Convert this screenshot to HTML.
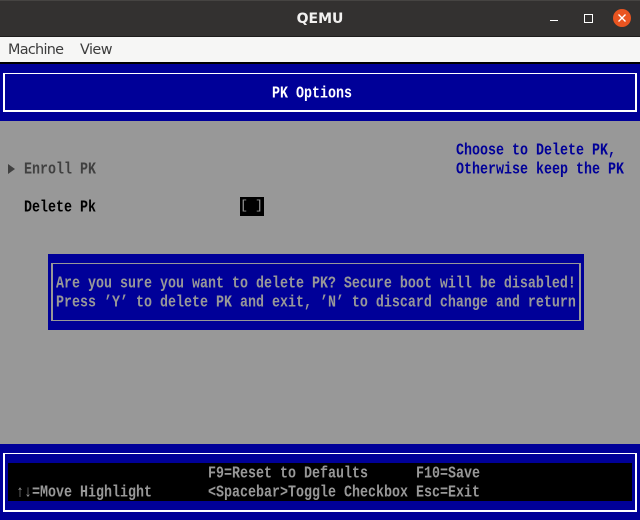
<!DOCTYPE html>
<html><head><meta charset="utf-8"><style>
html,body{margin:0;padding:0;width:640px;height:520px;overflow:hidden;background:#000}
div{position:absolute}
.t{position:absolute;font-family:"Liberation Mono","DejaVu Sans Mono",monospace;font-size:13.333px;line-height:19px;height:19px;white-space:pre;transform:scaleY(1.22);transform-origin:0 50%;font-weight:bold}
.w{color:#fff}.g{color:#989898}.b{color:#000098}.k{color:#000}.d{color:#404040}
</style></head><body>
<div style="left:0;top:0;width:640px;height:37px;background:#333130;border-bottom:1px solid #1e1d1c;box-sizing:border-box"></div>
<div style="left:0;top:0;width:640px;height:1px;background:#464442"></div>
<div style="left:0;top:0;width:640px;height:37px;text-align:center;color:#f2f1f0;font:bold 14px/39px 'DejaVu Sans','Liberation Sans',sans-serif">QEMU</div>
<div style="left:550px;top:20px;width:8px;height:1px;background:#fff"></div>
<div style="left:584px;top:14px;width:7px;height:7px;border:1px solid #fff"></div>
<div style="left:613px;top:9px;width:18px;height:18px;border-radius:50%;background:#e95420"></div>
<svg style="position:absolute;left:613px;top:9px" width="18" height="18"><path d="M5.5 5.5L12.5 12.5M12.5 5.5L5.5 12.5" stroke="#fff" stroke-width="1.4" fill="none"/></svg>
<div style="left:0;top:37px;width:640px;height:25px;background:#f6f6f5"></div>
<div style="left:8px;top:37px;height:25px;color:#3c3c3c;font:14.4px/26px 'DejaVu Sans','Liberation Sans',sans-serif;letter-spacing:-.7px;white-space:pre">Machine</div>
<div style="left:80px;top:37px;height:25px;color:#3c3c3c;font:14.4px/26px 'DejaVu Sans','Liberation Sans',sans-serif;letter-spacing:-.55px;white-space:pre">View</div>

<div style="left:0;top:62px;width:640px;height:2px;background:#000"></div>
<div style="left:0;top:64px;width:640px;height:57px;background:#000098"></div>
<div style="left:3px;top:73px;width:630px;height:36px;border:2px solid #fff;border-top-width:1px;border-bottom-width:2px"></div>
<div style="left:0;top:121px;width:640px;height:323px;background:#989898"></div>
<div style="left:0;top:444px;width:640px;height:76px;background:#000098"></div>
<div style="left:3px;top:453px;width:630px;height:56px;border:2px solid #fff;border-top-width:1px"></div>
<div style="left:8px;top:463px;width:624px;height:38px;background:#000"></div>
<div style="left:240px;top:197px;width:24px;height:19px;background:#000"></div>
<div style="left:48px;top:254px;width:536px;height:76px;background:#000098"></div>
<div style="left:51px;top:263px;width:526px;height:56px;border:2px solid #989898;border-top-width:1px;border-bottom-width:1px"></div>
<svg style="position:absolute;left:8px;top:164px" width="8" height="10"><path d="M0 0L7 5L0 10Z" fill="#404040"/></svg>

<span class="t w" style="left:272px;top:85px">PK Options</span>
<span class="t b" style="left:456px;top:142px">Choose to Delete PK,</span>
<span class="t b" style="left:456px;top:161px">Otherwise keep the PK</span>
<span class="t d" style="left:24px;top:161px">Enroll PK</span>
<span class="t k" style="left:24px;top:199px">Delete Pk</span>
<span class="t g" style="left:240px;top:197px;font-weight:normal;transform:none">[</span>
<span class="t g" style="left:255px;top:197px;font-weight:normal;transform:none">]</span>
<span class="t g" style="left:56px;top:275px">Are you sure you want to delete PK? Secure boot will be disabled!</span>
<span class="t g" style="left:56px;top:294px">Press ’Y’ to delete PK and exit, ’N’ to discard change and return</span>
<span class="t g" style="left:208px;top:465px">F9=Reset to Defaults</span>
<span class="t g" style="left:416px;top:465px">F10=Save</span>
<span class="t g" style="left:16px;top:484px">↑↓=Move Highlight</span>
<span class="t g" style="left:208px;top:484px">&lt;Spacebar&gt;Toggle Checkbox</span>
<span class="t g" style="left:416px;top:484px">Esc=Exit</span>
</body></html>
